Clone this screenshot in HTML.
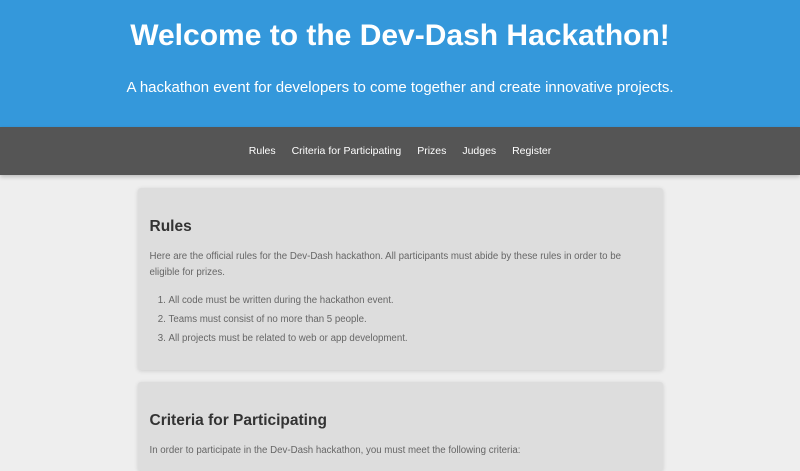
<!DOCTYPE html>
<html><head><style>
body{margin:0;background:#eeeeee;font-family:"Liberation Sans",sans-serif;width:800px;height:450px;overflow:hidden}
header{background:#3498db;height:127px;color:#fff;text-align:center}
header h1{margin:0;padding-top:16px;font-size:30px;line-height:40px;font-weight:bold}
header p{margin:0;padding-top:22px;font-size:15px;line-height:20px}
nav{background:#555;height:48px;box-shadow:0 2px 4px rgba(0,0,0,.2);text-align:center;line-height:48px;font-size:10.5px}
nav a{color:#fff;text-decoration:none;margin:0 6.5px}
.card{background:#dddddd;width:501px;margin:0 auto 12px;padding:12px;box-shadow:0 1px 4px rgba(0,0,0,.15);border-radius:3px;color:#666;font-size:9.7px}
.card h2{color:#333;font-size:15.5px;margin:14px 0 0;line-height:26px}
.card p{margin:9px 0 0;line-height:16px}
.card ol{margin:10px 0 10px;padding-left:19px;line-height:19px}
</style></head><body>
<header><h1>Welcome to the Dev-Dash Hackathon!</h1><p>A hackathon event for developers to come together and create innovative projects.</p></header>
<nav><a>Rules</a> <a>Criteria for Participating</a> <a>Prizes</a> <a>Judges</a> <a>Register</a></nav>
<div style="height:13px"></div>
<div class="card"><h2>Rules</h2><p>Here are the official rules for the Dev-Dash hackathon. All participants must abide by these rules in order to be eligible for prizes.</p>
<ol><li>All code must be written during the hackathon event.</li><li>Teams must consist of no more than 5 people.</li><li>All projects must be related to web or app development.</li></ol></div>
<div class="card"><h2>Criteria for Participating</h2><p>In order to participate in the Dev-Dash hackathon, you must meet the following criteria:</p></div>
</body></html>
